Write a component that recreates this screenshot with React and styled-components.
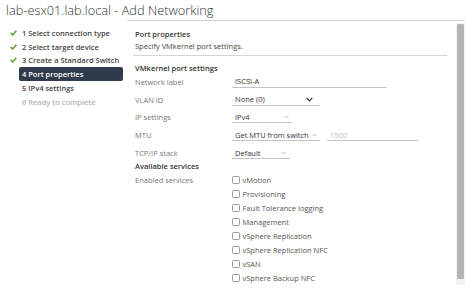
import React from "react";
import styled, { createGlobalStyle } from "styled-components";

const GlobalStyle = createGlobalStyle`
	html, body {
		margin: 0;
		padding: 0;
		background: #ffffff;
		font-family: "Open Sans", "Liberation Sans", sans-serif;
		color: #333;
	}
`;

const steps = [
	{ label: "1 Select connection type", state: "done" },
	{ label: "2 Select target device", state: "done" },
	{ label: "3 Create a Standard Switch", state: "done" },
	{ label: "4 Port properties", state: "active" },
	{ label: "5 IPv4 settings", state: "todo" },
	{ label: "6 Ready to complete", state: "disabled" },
];

const services = [
	"vMotion",
	"Provisioning",
	"Fault Tolerance logging",
	"Management",
	"vSphere Replication",
	"vSphere Replication NFC",
	"vSAN",
	"vSphere Backup NFC",
];

let Page = styled.div`
	width: 474px;
	height: 291px;
	overflow: hidden;
	display: flex;
	flex-direction: column;
`;

let Title = styled.h1`
	margin: 0;
	height: 20px;
	padding-left: 6px;
	font-size: 12.8px;
	font-weight: 300;
	line-height: 20px;
	color: #333;
	white-space: nowrap;
`;

let Body = styled.div`
	flex: 1;
	display: flex;
	min-height: 0;
`;

let Nav = styled.nav`
	width: 127px;
	flex-shrink: 0;
	padding-top: 6px;
	display: flex;
	flex-direction: column;
`;

let Step = styled.div`
	display: flex;
	align-items: center;
	height: 13.8px;
`;

let CheckSlot = styled.span`
	width: 19px;
	flex-shrink: 0;
	display: flex;
	align-items: center;
	padding-left: 10px;
	box-sizing: border-box;
`;

let StepLabel = styled.span`
	width: 104px;
	height: 13.8px;
	box-sizing: border-box;
	padding-left: 3px;
	display: flex;
	align-items: center;
	font-size: 7.5px;
	font-weight: 600;
	white-space: nowrap;
	border-radius: 2px;
	color: ${p => (p.state === "active" ? "#fff" : p.state === "disabled" ? "#b3b3b3" : "#444")};
	background: ${p => (p.state === "active" ? "#2f3b4b" : "transparent")};
`;

let Panel = styled.section`
	flex: 1;
	margin-right: 9px;
	border-top: 1px solid #cfcfcf;
	display: flex;
	min-height: 0;
`;

let Content = styled.div`
	flex: 1;
	padding: 7px 9px 0 6px;
	display: flex;
	flex-direction: column;
`;

let Heading = styled.div`
	padding-left: 2px;
	font-size: 7.5px;
	font-weight: 600;
	line-height: 12px;
	color: #333;
`;

let Desc = styled.div`
	padding-left: 2px;
	font-size: 7.5px;
	line-height: 13px;
	color: #444;
	border-bottom: 1px solid #d4d4d4;
	padding-bottom: 2px;
`;

let Section = styled.div`
	padding-left: 2px;
	margin-top: ${p => p.top || 0}px;
	font-size: 7.5px;
	font-weight: 600;
	line-height: 9px;
	color: #333;
`;

let Row = styled.div`
	display: flex;
	align-items: center;
	height: ${p => p.h || 17.8}px;
	padding-left: 2px;
`;

let Label = styled.div`
	width: 97px;
	flex-shrink: 0;
	font-size: 7.5px;
	color: #777;
	white-space: nowrap;
`;

let Field = styled.div`
	width: ${p => p.w}px;
	margin-left: ${p => p.gap || 0}px;
	height: 12px;
	box-sizing: border-box;
	display: flex;
	align-items: center;
	justify-content: space-between;
	padding: 0 ${p => p.pr || 3}px 0 3px;
	border-bottom: 1px solid #c4c4c4;
	font-size: 7.5px;
	color: ${p => (p.muted ? "#bdbdbd" : "#333")};
	white-space: nowrap;
`;

let Services = styled.div`
	display: flex;
	flex-direction: column;
	margin-top: 2px;
`;

let Check = styled.span`
	display: flex;
	align-items: center;
	gap: 2.5px;
	font-size: 7.5px;
	color: #555;
	white-space: nowrap;
`;

let Box = styled.span`
	width: 8px;
	height: 8px;
	box-sizing: border-box;
	border: 1px solid #9a9a9a;
	border-radius: 1.5px;
	background: #fff;
`;

let ScrollTrack = styled.div`
	width: 9px;
	margin: 2px 0 6px;
	box-sizing: border-box;
	padding: 1px;
	background: #f3f3f3;
	display: flex;
	flex-direction: column;
`;

let ScrollThumb = styled.div`
	flex: 1;
	margin-bottom: 5px;
	background: #b4b4b4;
	border-radius: 1px;
`;

const Tick = () => (
	<svg width="7" height="6" viewBox="0 0 7 6">
		<polyline points="0.6,3 2.6,5 6.4,0.8" fill="none" stroke="#5b9e2e" strokeWidth="1.4" />
	</svg>
);

const Chevron = ({ dark }) =>
	dark ? (
		<svg width="7" height="5" viewBox="0 0 7 5">
			<polyline points="0.7,0.8 3.5,3.8 6.3,0.8" fill="none" stroke="#333" strokeWidth="1.2" />
		</svg>
	) : (
		<svg width="5" height="4" viewBox="0 0 5 4">
			<polyline points="0.5,1 2.5,3 4.5,1" fill="none" stroke="#b0b0b0" strokeWidth="0.8" />
		</svg>
	);

export default class App extends React.Component {
	render() {
		return (
			<Page>
				<GlobalStyle />
				<Title>lab-esx01.lab.local - Add Networking</Title>
				<Body>
					<Nav>
						{steps.map(s => (
							<Step key={s.label}>
								<CheckSlot>{s.state === "done" && <Tick />}</CheckSlot>
								<StepLabel state={s.state}>{s.label}</StepLabel>
							</Step>
						))}
					</Nav>
					<Panel>
						<Content>
							<Heading>Port properties</Heading>
							<Desc>Specify VMkernel port settings.</Desc>
							<Section top={8}>VMkernel port settings</Section>
							<Row>
								<Label>Network label</Label>
								<Field w={155}>ISCSI-A</Field>
							</Row>
							<Row>
								<Label>VLAN ID</Label>
								<Field w={88} pr={7}>
									None (0)
									<Chevron dark />
								</Field>
							</Row>
							<Row>
								<Label>IP settings</Label>
								<Field w={60} pr={3}>
									IPv4
									<Chevron />
								</Field>
							</Row>
							<Row>
								<Label>MTU</Label>
								<Field w={88} pr={3}>
									Get MTU from switch
									<Chevron />
								</Field>
								<Field w={91} gap={7} muted>
									1500
								</Field>
							</Row>
							<Row>
								<Label>TCP/IP stack</Label>
								<Field w={58} pr={4}>
									Default
									<Chevron />
								</Field>
							</Row>
							<Section>Available services</Section>
							<Services>
								{services.map((name, i) => (
									<Row key={name} h={14}>
										<Label>{i === 0 ? "Enabled services" : ""}</Label>
										<Check>
											<Box />
											{name}
										</Check>
									</Row>
								))}
							</Services>
						</Content>
						<ScrollTrack>
							<ScrollThumb />
						</ScrollTrack>
					</Panel>
				</Body>
			</Page>
		);
	}
}
